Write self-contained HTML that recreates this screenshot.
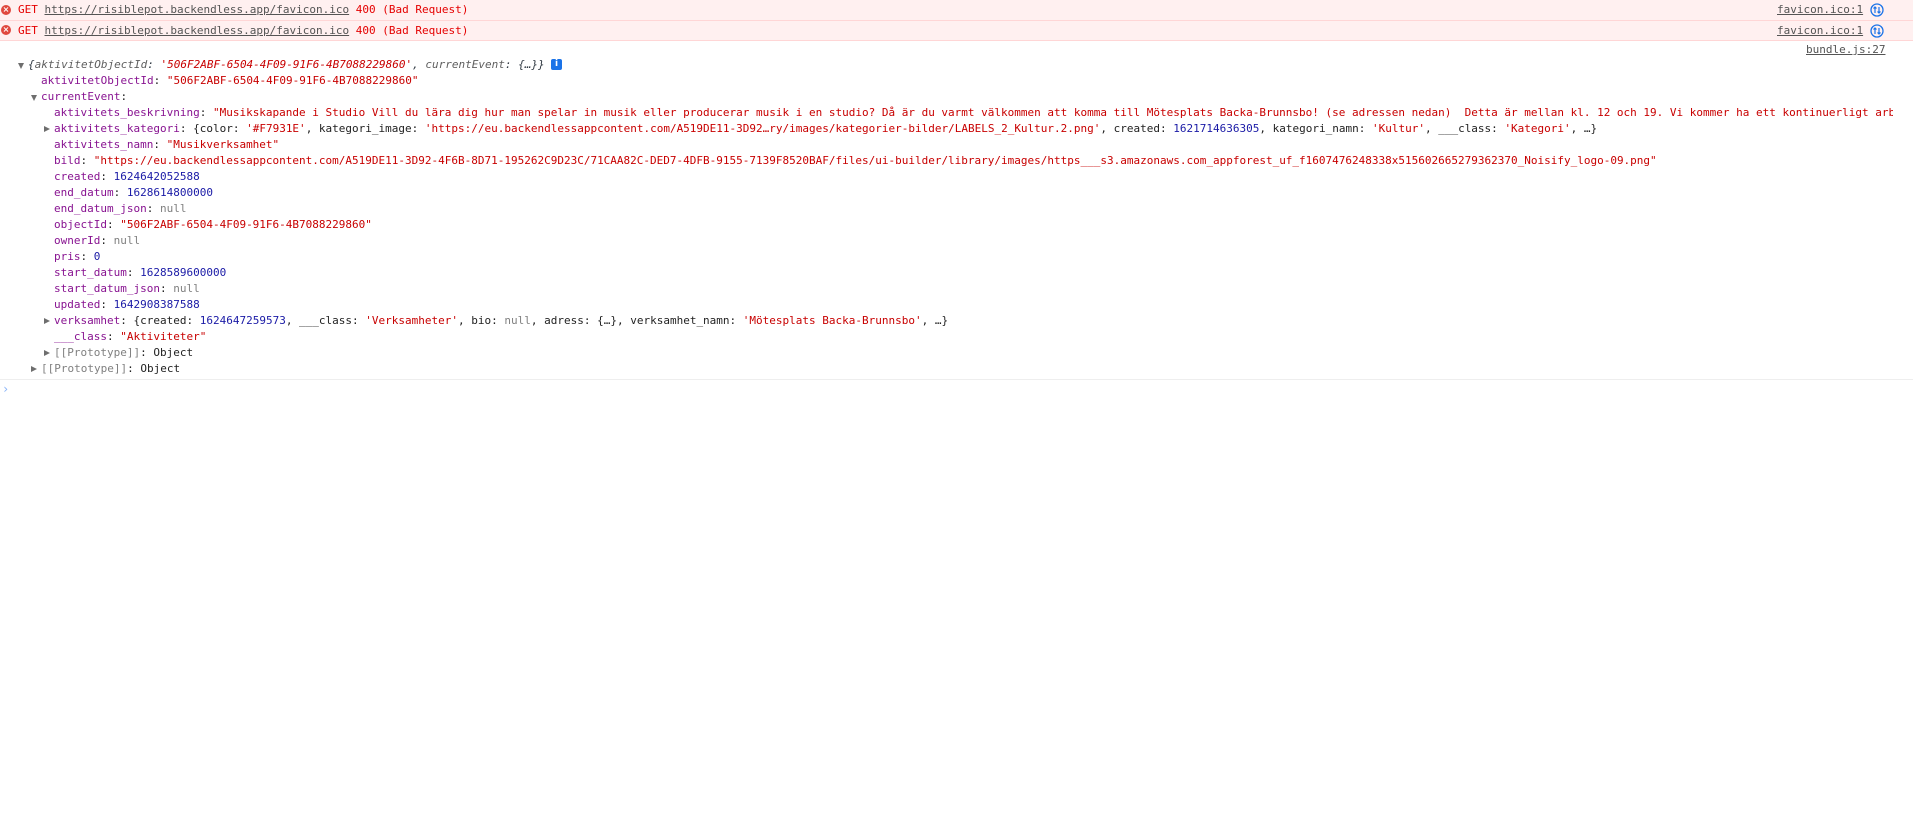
<!DOCTYPE html>
<html><head><meta charset="utf-8"><style>
html,body{margin:0;padding:0;background:#fff;width:1913px;height:823px;overflow:hidden}
body{font-family:"DejaVu Sans Mono","Liberation Mono",monospace;font-size:11px;color:#222}
.r{position:absolute;left:0;white-space:pre;line-height:16px;height:16px}
.err{position:absolute;left:0;width:1913px;height:20px;background:#fff0f0;border-bottom:1px solid #ffd6d6;color:#e50000;line-height:20px;white-space:pre}
.err .t{position:absolute;left:18px}
.u{text-decoration:underline;color:#545454}
.src{position:absolute;color:#545454;text-decoration:underline}
.ic{position:absolute;left:1px;top:5px;width:10px;height:10px;border-radius:50%;background:#e0483e;color:#fff;font-size:8px;line-height:10px;text-align:center;font-family:"DejaVu Sans",sans-serif;font-weight:bold}
.k{color:#881391}
.s{color:#c80000}
.n{color:#1a1aa6}
.nl{color:#808080}
.g{color:#303942}
.tri{position:absolute;width:0;height:0}
.dn{border-left:3.5px solid transparent;border-right:3.5px solid transparent;border-top:6px solid #6e6e6e}
.rt{border-top:3.5px solid transparent;border-bottom:3.5px solid transparent;border-left:6px solid #6e6e6e}
</style></head><body>
<div class="err" style="top:0"><span class="ic">×</span><span class="t">GET <span class="u">https://risiblepot.backendless.app/favicon.ico</span> 400 (Bad Request)</span><span class="src" style="left:1777px;top:0;line-height:20px">favicon.ico:1</span><svg style="position:absolute;left:1870px;top:3px" width="14" height="14" viewBox="0 0 14 14"><circle cx="7" cy="7" r="6" fill="none" stroke="#1a73e8" stroke-width="1.3"/><path d="M5 10V4M3.5 5.5L5 4l1.5 1.5M9 4v6M7.5 8.5L9 10l1.5-1.5" fill="none" stroke="#1a73e8" stroke-width="1.2"/></svg></div>
<div class="err" style="top:21px;height:19px;line-height:19px"><span class="ic" style="top:4px">×</span><span class="t">GET <span class="u">https://risiblepot.backendless.app/favicon.ico</span> 400 (Bad Request)</span><span class="src" style="left:1777px;top:0;line-height:19px">favicon.ico:1</span><svg style="position:absolute;left:1870px;top:3px" width="14" height="14" viewBox="0 0 14 14"><circle cx="7" cy="7" r="6" fill="none" stroke="#1a73e8" stroke-width="1.3"/><path d="M5 10V4M3.5 5.5L5 4l1.5 1.5M9 4v6M7.5 8.5L9 10l1.5-1.5" fill="none" stroke="#1a73e8" stroke-width="1.2"/></svg></div>
<span class="src" style="left:1806px;top:42px;line-height:16px">bundle.js:27</span>

<div class="tri dn" style="left:18px;top:63px"></div>
<div class="r" style="top:57px;left:28px;font-style:italic"><span class="g">{</span><span style="color:#5e5e5e">aktivitetObjectId</span><span class="g">: </span><span class="s">'506F2ABF-6504-4F09-91F6-4B7088229860'</span><span class="g">, </span><span style="color:#5e5e5e">currentEvent</span><span class="g">: {…}}</span></div>
<div style="position:absolute;left:551px;top:59px;width:11px;height:11px;background:#1a73e8;border-radius:2px;color:#fff;font:bold 9px/11px 'DejaVu Sans',sans-serif;text-align:center">i</div>
<div class="r" style="top:73px;left:41px"><span class="k">aktivitetObjectId</span>: <span class="s">"506F2ABF-6504-4F09-91F6-4B7088229860"</span></div>
<div class="tri dn" style="left:31px;top:95px"></div>
<div class="r" style="top:89px;left:41px"><span class="k">currentEvent</span>:</div>
<div class="r" style="top:105px;left:54px;width:1839px;overflow:hidden"><span class="k">aktivitets_beskrivning</span>: <span class="s">"Musikskapande i Studio Vill du lära dig hur man spelar in musik eller producerar musik i en studio? Då är du varmt välkommen att komma till Mötesplats Backa-Brunnsbo! (se adressen nedan)  Detta är mellan kl. 12 och 19. Vi kommer ha ett kontinuerligt arbete med</span></div>
<div class="tri rt" style="left:44px;top:126px"></div>
<div class="r" style="top:121px;left:54px"><span class="k">aktivitets_kategori</span>: {color: <span class="s">'#F7931E'</span>, kategori_image: <span class="s">'https://eu.backendlessappcontent.com/A519DE11-3D92…ry/images/kategorier-bilder/LABELS_2_Kultur.2.png'</span>, created: <span class="n">1621714636305</span>, kategori_namn: <span class="s">'Kultur'</span>, ___class: <span class="s">'Kategori'</span>, …}</div>
<div class="r" style="top:137px;left:54px"><span class="k">aktivitets_namn</span>: <span class="s">"Musikverksamhet"</span></div>
<div class="r" style="top:153px;left:54px"><span class="k">bild</span>: <span class="s">"https://eu.backendlessappcontent.com/A519DE11-3D92-4F6B-8D71-195262C9D23C/71CAA82C-DED7-4DFB-9155-7139F8520BAF/files/ui-builder/library/images/https___s3.amazonaws.com_appforest_uf_f1607476248338x515602665279362370_Noisify_logo-09.png"</span></div>
<div class="r" style="top:169px;left:54px"><span class="k">created</span>: <span class="n">1624642052588</span></div>
<div class="r" style="top:185px;left:54px"><span class="k">end_datum</span>: <span class="n">1628614800000</span></div>
<div class="r" style="top:201px;left:54px"><span class="k">end_datum_json</span>: <span class="nl">null</span></div>
<div class="r" style="top:217px;left:54px"><span class="k">objectId</span>: <span class="s">"506F2ABF-6504-4F09-91F6-4B7088229860"</span></div>
<div class="r" style="top:233px;left:54px"><span class="k">ownerId</span>: <span class="nl">null</span></div>
<div class="r" style="top:249px;left:54px"><span class="k">pris</span>: <span class="n">0</span></div>
<div class="r" style="top:265px;left:54px"><span class="k">start_datum</span>: <span class="n">1628589600000</span></div>
<div class="r" style="top:281px;left:54px"><span class="k">start_datum_json</span>: <span class="nl">null</span></div>
<div class="r" style="top:297px;left:54px"><span class="k">updated</span>: <span class="n">1642908387588</span></div>
<div class="tri rt" style="left:44px;top:318px"></div>
<div class="r" style="top:313px;left:54px"><span class="k">verksamhet</span>: {created: <span class="n">1624647259573</span>, ___class: <span class="s">'Verksamheter'</span>, bio: <span class="nl">null</span>, adress: {…}, verksamhet_namn: <span class="s">'Mötesplats Backa-Brunnsbo'</span>, …}</div>
<div class="r" style="top:329px;left:54px"><span class="k">___class</span>: <span class="s">"Aktiviteter"</span></div>
<div class="tri rt" style="left:44px;top:350px"></div>
<div class="r" style="top:345px;left:54px"><span class="nl">[[Prototype]]</span>: Object</div>
<div class="tri rt" style="left:31px;top:366px"></div>
<div class="r" style="top:361px;left:41px"><span class="nl">[[Prototype]]</span>: Object</div>
<div style="position:absolute;left:0;top:379px;width:1913px;border-top:1px solid #eee"></div>
<div class="r" style="top:381px;left:2px;color:#8ab4f8;font-size:12px">›</div>
</body></html>
